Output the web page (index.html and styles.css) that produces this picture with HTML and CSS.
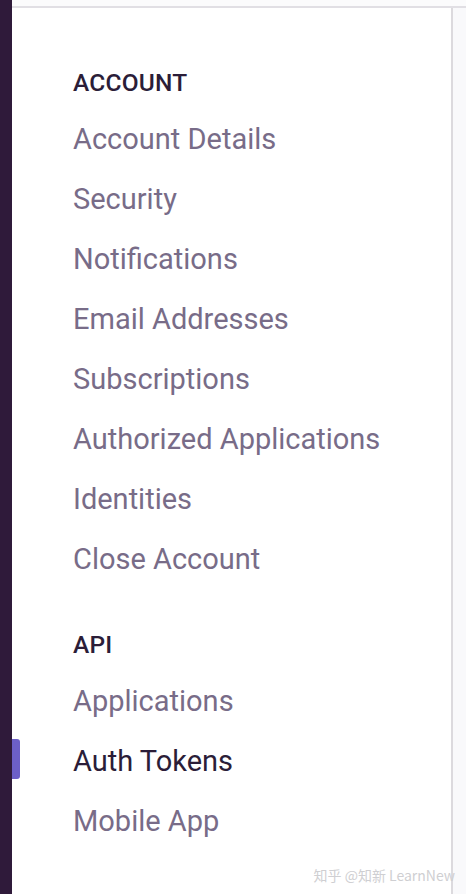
FILE: index.html
```html
<!DOCTYPE html>
<html>
<head>
<meta charset="utf-8">
<link rel="stylesheet" href="styles.css">
</head>
<body>
<div class="page">
  <div class="rail"></div>
  <div class="main">
    <div class="topbar"></div>
    <div class="content">
      <nav class="nav">
        <div class="section">
          <div class="heading">ACCOUNT</div>
          <a class="item">Account Details</a>
          <a class="item">Security</a>
          <a class="item">Notifications</a>
          <a class="item">Email Addresses</a>
          <a class="item">Subscriptions</a>
          <a class="item">Authorized Applications</a>
          <a class="item">Identities</a>
          <a class="item">Close Account</a>
        </div>
        <div class="section">
          <div class="heading">API</div>
          <a class="item">Applications</a>
          <a class="item active">Auth Tokens</a>
          <a class="item">Mobile App</a>
        </div>
      </nav>
      <div class="side"></div>
    </div>
  </div>
</div>
<div class="watermark">知乎 @知新 LearnNew</div>
</body>
</html>
```
FILE: styles.css
```css
html, body {
  margin: 0;
  padding: 0;
  height: 100%;
  overflow: hidden;
}
body {
  font-family: Roboto, "Liberation Sans", sans-serif;
  background: #fff;
}
.page {
  display: flex;
  height: 100vh;
}
.rail {
  width: 12px;
  background: #2f1a3a;
  flex: none;
}
.main {
  flex: 1;
  display: flex;
  flex-direction: column;
}
.topbar {
  height: 6px;
  background: #fbfbfc;
  border-bottom: 2px solid #e1dfe4;
  flex: none;
}
.content {
  flex: 1;
  display: flex;
}
.nav {
  flex: none;
  border-right: 2px solid #dcdade;
  padding: 48px 0 0 61px;
  box-sizing: border-box;
  width: 441px;
}
.section {
  display: flex;
  flex-direction: column;
  margin-bottom: 30px;
}
.heading {
  height: 52px;
  line-height: 54px;
  font-size: 24.5px;
  font-weight: 500;
  color: #2b1d38;
  letter-spacing: 0.2px;
}
.item {
  position: relative;
  height: 60px;
  line-height: 62px;
  font-size: 29px;
  color: #786c88;
}
.item.active {
  color: #2b1d38;
}
.item.active::before {
  content: "";
  position: absolute;
  left: -61px;
  top: 9px;
  width: 8px;
  height: 40px;
  background: #6c5fc7;
  border-radius: 0 3px 3px 0;
}
.side {
  flex: 1;
  background: #f9f9fb;
}
.watermark {
  position: absolute;
  right: 11px;
  bottom: 9px;
  font-family: "Noto Sans CJK SC", sans-serif;
  font-size: 14px;
  color: #cfcfd2;
}
```
